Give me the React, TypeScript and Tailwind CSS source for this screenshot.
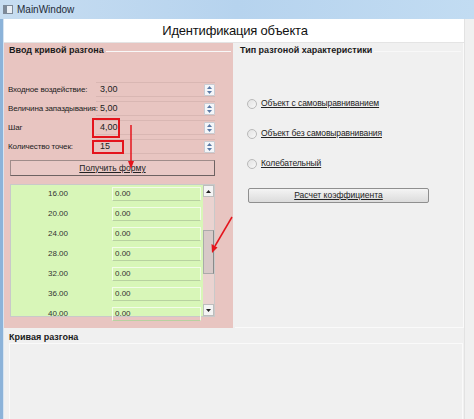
import React from "react";

const font = { fontFamily: '"Liberation Sans", Arial, sans-serif' };

const inputs = [
  { label: "Входное воздействие:", value: "3,00" },
  { label: "Величина запаздывания:", value: "5,00" },
  { label: "Шаг", value: "4,00" },
  { label: "Количество точек:", value: "15" },
];

const points = ["16.00", "20.00", "24.00", "28.00", "32.00", "36.00", "40.00"];

const radios = [
  "Объект с самовыравниванием",
  "Объект без самовыравнивания",
  "Колебательный",
];

const SpinArrows = () => (
  <div className="w-[11px] h-[12px] bg-[#f4f6f9] border border-[#c9ccd2] rounded-[1px] flex flex-col items-center justify-center gap-[2px]">
    <svg width="5" height="3" viewBox="0 0 5 3">
      <path d="M0 3 L2.5 0 L5 3 Z" fill="#5a7aa6" />
    </svg>
    <svg width="5" height="3" viewBox="0 0 5 3">
      <path d="M0 0 L2.5 3 L5 0 Z" fill="#5a7aa6" />
    </svg>
  </div>
);

const GroupTitle = ({ title }: { title: string }) => (
  <div className="flex items-center h-[12px] pl-[5px] pr-[2px]">
    <span className="text-[9px] font-bold text-[#1a1a1a] leading-none pr-[2px]">
      {title}
    </span>
    <div className="flex-1 h-px bg-[#f8f8f8] mt-[2px]" />
  </div>
);

export default function App() {
  return (
    <div
      className="w-[474px] h-[419px] relative overflow-hidden bg-[#f0f0f0] flex flex-col"
      style={font}
    >
      {/* window caption */}
      <div className="h-[19px] shrink-0 bg-gradient-to-r from-[#c7ddf1] via-[#b6d3ee] to-[#c2dcf2] flex items-center pl-[3px] gap-[4px]">
        <div className="w-[10px] h-[9px] border border-[#7d8a99] bg-[#e9eef4] flex">
          <div className="w-[3px] bg-[#7d8a99]" />
        </div>
        <span className="text-[10px] text-[#1e2a36]">MainWindow</span>
      </div>

      <div className="flex-1 flex">
        <div className="w-[3px] bg-[#8cb3d9] shrink-0" />
        <div className="w-[1px] bg-[#d6e4f1] shrink-0" />

        <div className="w-[460px] flex flex-col">
          {/* header */}
          <div className="h-[24px] bg-white flex items-center justify-center border-b border-[#e4e4e4]">
            <span className="text-[13px] tracking-[-0.2px] text-[#111] pl-[2px]">
              Идентификация объекта
            </span>
          </div>

          <div className="h-[285px] flex gap-[2px]">
            {/* curve input */}
            <div className="w-[229px] bg-[#e8c5c1] flex flex-col pt-[1px]">
              <GroupTitle title="Ввод кривой разгона" />
              <div className="flex flex-col gap-[4px] mt-[26px] pl-[4px]">
                {inputs.map((row) => (
                  <div key={row.label} className="flex items-center h-[15px]">
                    <span className="w-[88px] text-[8px] tracking-[-0.15px] text-[#222] whitespace-nowrap">
                      {row.label}
                    </span>
                    <div className="w-[119px] h-[15px] flex items-center border-y border-[#d9b7b3]">
                      <span className="flex-1 text-[9px] text-[#222] pl-[4px]">
                        {row.value}
                      </span>
                      <SpinArrows />
                    </div>
                  </div>
                ))}
              </div>
              <div className="ml-[6px] mt-[6px] w-[205px] h-[16px] border border-[#9f8c8a] border-r-[#6d6262] border-b-[#6d6262] bg-[#e9c9c6] flex items-center justify-center">
                <span className="text-[8.5px] text-[#222] underline">
                  Получить форму
                </span>
              </div>

              {/* points table */}
              <div className="ml-[6px] mt-[8px] w-[205px] h-[133px] bg-[#d8f6b8] border border-[#c9c9c9] flex">
                <div className="flex-1 flex flex-col pt-[2px] gap-[6px]">
                  {points.map((p) => (
                    <div key={p} className="h-[14px] flex items-center">
                      <span className="w-[101px] pl-[37px] text-[8px] text-[#333]">
                        {p}
                      </span>
                      <div className="w-[89px] h-[14px] border border-[#f2fbe8] border-b-[#b8d1a0] flex items-center pl-[2px]">
                        <span className="text-[8px] text-[#333]">0.00</span>
                      </div>
                    </div>
                  ))}
                </div>
                <div className="w-[11px] bg-[#ead3d0] flex flex-col">
                  <div className="h-[12px] bg-[#f4f4f4] border border-[#bdbdbd] flex items-center justify-center">
                    <svg width="5" height="3" viewBox="0 0 5 3">
                      <path d="M0 3 L2.5 0 L5 3 Z" fill="#222" />
                    </svg>
                  </div>
                  <div className="h-[33px]" />
                  <div className="h-[44px] bg-[#d8c9c8] border border-[#aaa] border-r-[#8a8a8a]" />
                  <div className="flex-1" />
                  <div className="h-[12px] bg-[#f4f4f4] border border-[#bdbdbd] flex items-center justify-center">
                    <svg width="5" height="3" viewBox="0 0 5 3">
                      <path d="M0 0 L2.5 3 L5 0 Z" fill="#222" />
                    </svg>
                  </div>
                </div>
              </div>
            </div>

            {/* response type */}
            <div className="w-[229px] flex flex-col pt-[1px] border-r border-b border-[#fafafa]">
              <GroupTitle title="Тип разгоной характеристики" />
              <div className="flex flex-col gap-[17px] mt-[41px] pl-[12px]">
                {radios.map((r) => (
                  <div key={r} className="flex items-center gap-[4px] h-[13px]">
                    <div className="w-[10px] h-[10px] rounded-full border border-[#b9b9b9] bg-gradient-to-br from-[#e2e2e2] to-[#f8f8f8]" />
                    <span className="text-[8.5px] tracking-[-0.1px] text-[#222] underline">{r}</span>
                  </div>
                ))}
              </div>
              <div className="ml-[13px] mt-[18px] w-[181px] h-[15px] border border-[#8f8f8f] rounded-[2px] bg-gradient-to-b from-[#f4f4f4] to-[#dcdcdc] flex items-center justify-center">
                <span className="text-[8.5px] text-[#222] underline">
                  Расчет коэффициента
                </span>
              </div>
            </div>
          </div>

          {/* curve plot */}
          <div className="flex-1 flex flex-col pt-[3px]">
            <div className="h-[12px] pl-[5px] flex items-center">
              <span className="text-[9px] font-bold text-[#1a1a1a] leading-none">
                Кривая разгона
              </span>
            </div>
            <div className="flex-1 ml-[5px] mr-[1px] border-l border-t border-r border-[#fafafa]" />
          </div>
        </div>

        <div className="flex-1 border-l border-[#e2e2e2] bg-[#f0f0f0]" />
      </div>

      {/* red annotations */}
      <svg
        className="absolute inset-0 pointer-events-none"
        width="474"
        height="419"
        viewBox="0 0 474 419"
      >
        <rect x="93" y="119" width="26" height="18" fill="none" stroke="#e4141c" strokeWidth="2" />
        <rect x="93" y="141" width="30" height="12" fill="none" stroke="#e4141c" strokeWidth="2" />
        <line x1="131" y1="125" x2="131" y2="162" stroke="#e4141c" strokeWidth="1.5" />
        <path d="M128 161 L131 169 L134 161 Z" fill="#e4141c" />
        <line x1="232" y1="217" x2="215" y2="246" stroke="#e4141c" strokeWidth="1.5" />
        <path d="M211.5 244 L212 253 L217.5 247.5 Z" fill="#e4141c" />
      </svg>
    </div>
  );
}
